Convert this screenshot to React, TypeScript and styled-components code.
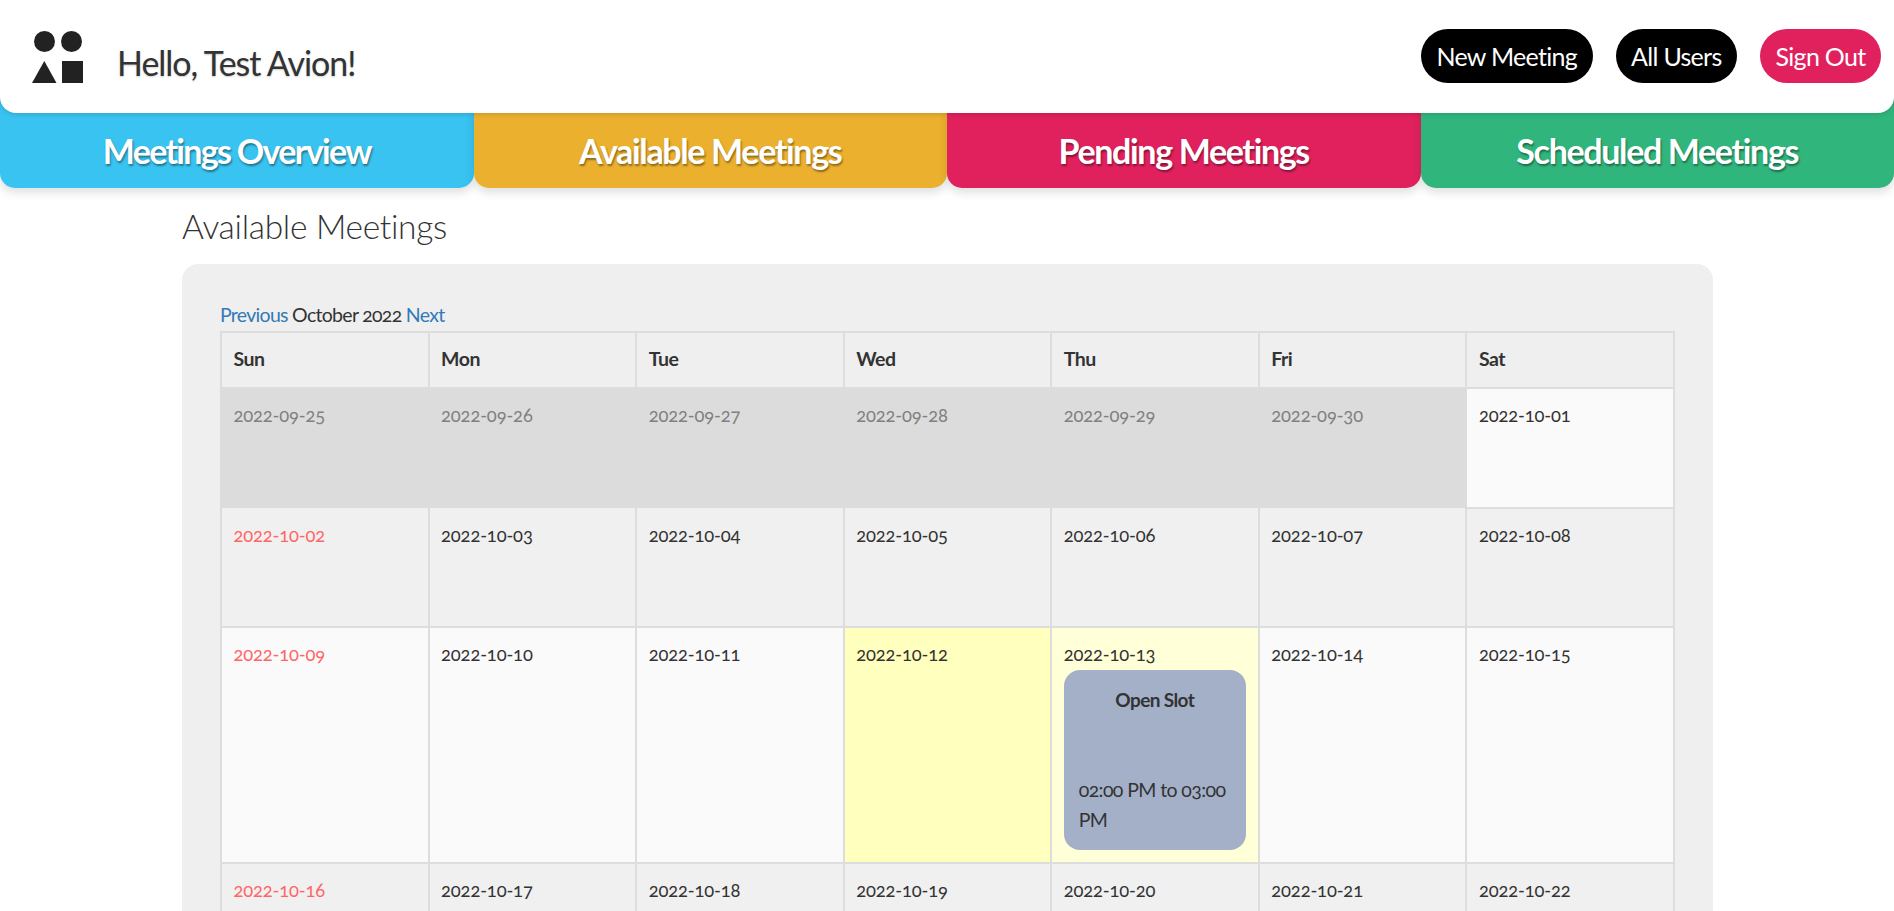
import React from "react";
import styled, { createGlobalStyle } from "styled-components";

const FONT = `"Lato", "Open Sans", "Liberation Sans", sans-serif`;

const Global = createGlobalStyle`
  html, body { margin: 0; padding: 0; overflow: hidden; height: 911px; background: #fff; }
  body { font-family: ${FONT}; color: #333; font-feature-settings: "onum" 1; }
  * { box-sizing: border-box; }
`;

const Header = styled.header`
  position: relative;
  z-index: 2;
  height: 113px;
  background: #fff;
  border-radius: 0 0 16px 16px;
  box-shadow: 0 1px 5px rgba(0, 0, 0, 0.16);
  display: flex;
  align-items: center;
  justify-content: space-between;
  padding: 0 13px 0 32px;
`;
const Brand = styled.div`
  display: flex;
  align-items: center;
  gap: 33px;
`;
const Logo = styled.svg`
  width: 52px;
  height: 52px;
  display: block;
`;
const Greeting = styled.h1`
  margin: 0;
  padding-top: 11px;
  font-size: 34px;
  font-weight: 400;
  letter-spacing: -1.05px;
  color: #333;
  text-shadow: 0 1px 2px rgba(0, 0, 0, 0.2);
`;
const Actions = styled.nav`
  display: flex;
  gap: 23px;
  margin-bottom: 2px;
`;
const Pill = styled.a<{ $bg: string }>`
  height: 54px;
  padding: 0 15.5px;
  display: flex;
  align-items: center;
  border-radius: 27px;
  background: ${(p) => p.$bg};
  color: #fff;
  font-size: 25px;
  letter-spacing: -0.7px;
`;
const Tabs = styled.div`
  display: grid;
  grid-template-columns: repeat(4, 1fr);
  height: 91px;
  margin-top: -16px;
`;
const Tab = styled.a<{ $bg: string; $tight?: boolean }>`
  display: flex;
  align-items: center;
  justify-content: center;
  background: ${(p) => p.$bg};
  border-radius: 0 0 15px 15px;
  box-shadow: 0 5px 10px rgba(0, 0, 0, 0.12);
  color: #fff;
  font-size: 34px;
  font-weight: 700;
  letter-spacing: ${(p) => (p.$tight ? "-1.7px" : "-1.35px")};
  text-shadow: 1px 2px 2px rgba(0, 0, 0, 0.4);
  padding-top: 15px;
`;
const Main = styled.main`
  padding: 16px 181px 0 182px;
`;
const Title = styled.h2`
  margin: 0 0 17px;
  height: 43px;
  line-height: 45px;
  font-size: 33.5px;
  font-weight: 300;
  letter-spacing: -0.3px;
  color: #333;
`;
const Card = styled.section`
  background: #efefef;
  border-radius: 16px;
  padding: 36px 38px 0;
`;
const MonthBar = styled.div`
  height: 31px;
  line-height: 30px;
  font-size: 19.5px;
  letter-spacing: -0.7px;
  color: #333;
`;
const NavLink = styled.a`
  color: #337ab7;
`;
const Table = styled.table`
  width: 100%;
  table-layout: fixed;
  border-collapse: collapse;
  border: 2px solid #ddd;
`;
const Head = styled.th`
  height: 56px;
  padding: 0 12px 4px 11.5px;
  text-align: left;
  vertical-align: middle;
  border: 2px solid #ddd;
  border-top: 0;
  font-size: 19.5px;
  font-weight: 700;
  letter-spacing: -0.5px;
  color: #333;
`;
const tones = {
  other: "#dcdcdc",
  even: "#f0f0f0",
  odd: "#fafafa",
  sel: "#ffffbe",
  today: "#ffffd8",
};
type Tone = keyof typeof tones;
const Cell = styled.td<{ $tone: Tone; $bare?: boolean; $h: number }>`
  height: ${(p) => p.$h}px;
  padding: 14px 12px 12px 11.5px;
  vertical-align: top;
  background: ${(p) => tones[p.$tone]};
  border: 2px solid ${(p) => (p.$bare ? "transparent" : "#ddd")};
  ${(p) => (p.$bare ? "border-left-color: #dcdcdc; border-right-color: #dcdcdc;" : "")}
`;
const DateLabel = styled.div<{ $kind: "plain" | "muted" | "sun" }>`
  font-size: 18.4px;
  line-height: 24px;
  letter-spacing: -0.15px;
  color: ${(p) => (p.$kind === "muted" ? "#808080" : p.$kind === "sun" ? "#f66" : "#333")};
`;
const Slot = styled.div`
  margin: 4px 0 0;
  height: 180px;
  border-radius: 16px;
  background: #a4b0c8;
  padding: 18px 15px 15px;
  color: #333;
  display: flex;
  flex-direction: column;
  justify-content: space-between;
`;
const SlotTitle = styled.div`
  text-align: center;
  font-size: 19px;
  font-weight: 700;
  letter-spacing: -0.6px;
  line-height: 24px;
`;
const SlotTime = styled.div`
  font-size: 19.5px;
  line-height: 30px;
  letter-spacing: -0.6px;
`;

const days = ["Sun", "Mon", "Tue", "Wed", "Thu", "Fri", "Sat"];
const rows: { dates: string[]; h: number }[] = [
  { dates: ["2022-09-25", "2022-09-26", "2022-09-27", "2022-09-28", "2022-09-29", "2022-09-30", "2022-10-01"], h: 120 },
  { dates: ["2022-10-02", "2022-10-03", "2022-10-04", "2022-10-05", "2022-10-06", "2022-10-07", "2022-10-08"], h: 119 },
  { dates: ["2022-10-09", "2022-10-10", "2022-10-11", "2022-10-12", "2022-10-13", "2022-10-14", "2022-10-15"], h: 235 },
  { dates: ["2022-10-16", "2022-10-17", "2022-10-18", "2022-10-19", "2022-10-20", "2022-10-21", "2022-10-22"], h: 120 },
];

function toneFor(date: string, row: number): Tone {
  if (date.startsWith("2022-09")) return "other";
  if (date === "2022-10-12") return "sel";
  if (date === "2022-10-13") return "today";
  return row % 2 === 0 ? "odd" : "even";
}

export default function App() {
  return (
    <>
      <Global />
      <Header>
        <Brand>
          <Logo viewBox="0 0 52 52" aria-label="logo">
            <circle cx="12.5" cy="10.5" r="10.5" fill="#222" />
            <circle cx="39.5" cy="10.5" r="10.5" fill="#222" />
            <polygon points="0,52 24.5,52 12.3,30" fill="#222" />
            <rect x="30" y="30" width="21" height="22" fill="#222" />
          </Logo>
          <Greeting>Hello, Test Avion!</Greeting>
        </Brand>
        <Actions>
          <Pill $bg="#000">New Meeting</Pill>
          <Pill $bg="#000">All Users</Pill>
          <Pill $bg="#e0215e">Sign Out</Pill>
        </Actions>
      </Header>
      <Tabs>
        <Tab $bg="#38c3f0" $tight>Meetings Overview</Tab>
        <Tab $bg="#ebb02d">Available Meetings</Tab>
        <Tab $bg="#e0215e">Pending Meetings</Tab>
        <Tab $bg="#30b67d">Scheduled Meetings</Tab>
      </Tabs>
      <Main>
        <Title>Available Meetings</Title>
        <Card>
          <MonthBar>
            <NavLink>Previous</NavLink> October 2022 <NavLink>Next</NavLink>
          </MonthBar>
          <Table>
            <thead>
              <tr>
                {days.map((d) => (
                  <Head key={d}>{d}</Head>
                ))}
              </tr>
            </thead>
            <tbody>
              {rows.map((r, i) => (
                <tr key={i}>
                  {r.dates.map((date, j) => {
                    const other = date.startsWith("2022-09");
                    return (
                      <Cell key={date} $tone={toneFor(date, i)} $bare={other} $h={r.h}>
                        <DateLabel $kind={other ? "muted" : j === 0 ? "sun" : "plain"}>{date}</DateLabel>
                        {date === "2022-10-13" && (
                          <Slot>
                            <SlotTitle>Open Slot</SlotTitle>
                            <SlotTime>02:00 PM to 03:00 PM</SlotTime>
                          </Slot>
                        )}
                      </Cell>
                    );
                  })}
                </tr>
              ))}
            </tbody>
          </Table>
        </Card>
      </Main>
    </>
  );
}
